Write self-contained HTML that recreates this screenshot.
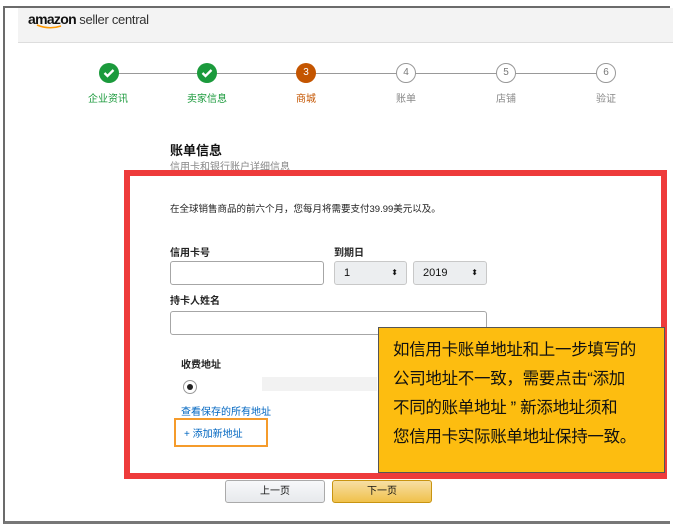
<!DOCTYPE html>
<html><head><meta charset="utf-8"><style>
body{margin:0;width:673px;height:527px;background:#fff;position:relative;overflow:hidden;font-family:"Liberation Sans","Noto Sans CJK SC",sans-serif;}
.a{position:absolute}
.step{position:absolute;top:63px;width:20px;height:20px;border-radius:50%;box-sizing:border-box;text-align:center;font-size:10px;line-height:18px}
.lbl{position:absolute;top:90px;font-size:10px;width:80px;text-align:center;margin-left:-40px}
.inp{position:absolute;border:1px solid #a6a6a6;border-radius:3px;background:#fff;box-sizing:border-box}
.sel{position:absolute;border:1px solid #c8c8c8;border-radius:3px;background:#eceef0;box-sizing:border-box;font-size:11px;line-height:22px;padding-left:9px;color:#111}
.sel span{position:absolute;right:8px;top:0;font-size:8px}
</style></head><body>
<div class="a" style="left:3px;top:6px;width:665px;height:513px;border:2px solid #6b6b6b;border-right:none;border-bottom:3px solid #777"></div>
<div class="a" style="left:18px;top:8px;width:655px;height:34px;background:#f3f3f3;border-bottom:1px solid #ddd"></div>
<div class="a" style="left:28px;top:11px;font-size:14px;color:#111"><b style="letter-spacing:-0.7px">amazon</b><span style="font-size:13px;color:#333;letter-spacing:-0.3px"> seller central</span></div>
<svg class="a" style="left:36px;top:24px" width="28" height="6"><path d="M1 1 Q13 6 25 2" stroke="#f90" stroke-width="1.5" fill="none"/></svg>
<div class="a" style="left:110px;top:73px;width:496px;height:1px;background:#999"></div>
<div class="step" style="left:99px;background:#1b9a3c"><svg width="20" height="20"><path d="M5.5 10l3 3 6-6" stroke="#fff" stroke-width="2.3" fill="none"/></svg></div>
<div class="step" style="left:197px;background:#1b9a3c;top:63px"><svg width="20" height="20" style="margin-left:-1px"><path d="M5.5 10l3 3 6-6" stroke="#fff" stroke-width="2.3" fill="none"/></svg></div>
<div class="step" style="left:296px;background:#c45500;color:#fff;line-height:20px">3</div>
<div class="step" style="left:396px;background:#fff;border:1px solid #999;color:#777">4</div>
<div class="step" style="left:496px;background:#fff;border:1px solid #999;color:#777">5</div>
<div class="step" style="left:596px;background:#fff;border:1px solid #999;color:#777">6</div>
<div class="lbl" style="left:108px;color:#1b9a3c">企业资讯</div>
<div class="lbl" style="left:207px;color:#1b9a3c">卖家信息</div>
<div class="lbl" style="left:306px;color:#c45500">商城</div>
<div class="lbl" style="left:406px;color:#888">账单</div>
<div class="lbl" style="left:506px;color:#888">店铺</div>
<div class="lbl" style="left:606px;color:#888">验证</div>
<div class="a" style="left:170px;top:140px;font-size:13px;font-weight:bold;color:#111">账单信息</div>
<div class="a" style="left:170px;top:158px;font-size:10px;color:#888">信用卡和银行账户详细信息</div>
<div class="a" style="left:124px;top:170px;width:543px;height:309px;border:6px solid #ee3b3b;box-sizing:border-box;background:#fff"></div>
<div class="a" style="left:170px;top:201px;font-size:9.5px;color:#222">在全球销售商品的前六个月，您每月将需要支付39.99美元以及。</div>
<div class="a" style="left:170px;top:244px;font-size:10px;font-weight:bold;color:#222">信用卡号</div>
<div class="a" style="left:334px;top:244px;font-size:10px;font-weight:bold;color:#222">到期日</div>
<div class="inp" style="left:170px;top:261px;width:154px;height:24px"></div>
<div class="sel" style="left:334px;top:261px;width:73px;height:24px">1<span>⬍</span></div>
<div class="sel" style="left:413px;top:261px;width:74px;height:24px">2019<span>⬍</span></div>
<div class="a" style="left:170px;top:292px;font-size:10px;font-weight:bold;color:#222">持卡人姓名</div>
<div class="inp" style="left:170px;top:311px;width:317px;height:24px"></div>
<div class="a" style="left:181px;top:356px;font-size:10px;font-weight:bold;color:#222">收费地址</div>
<div class="a" style="left:183px;top:380px;width:14px;height:14px;border:1px solid #999;border-radius:50%;box-sizing:border-box;background:#fff"></div>
<div class="a" style="left:187px;top:384px;width:6px;height:6px;border-radius:50%;background:#222"></div>
<div class="a" style="left:262px;top:377px;width:115px;height:14px;background:#f2f2f2"></div>
<div class="a" style="left:181px;top:403px;font-size:10px;color:#0066c0">查看保存的所有地址</div>
<div class="a" style="left:174px;top:418px;width:94px;height:29px;border:2px solid #f59b2b;box-sizing:border-box"></div>
<div class="a" style="left:184px;top:425px;font-size:10px;color:#0066c0">+ 添加新地址</div>
<div class="a" style="left:378px;top:327px;width:287px;height:146px;background:#fdbd10;border:1px solid #555;box-sizing:border-box;padding:8px 0 0 14px;font-size:16.5px;line-height:29px;color:#111;white-space:nowrap;letter-spacing:-0.3px">如信用卡账单地址和上一步填写的<br>公司地址不一致，需要点击“添加<br>不同的账单地址 ” 新添地址须和<br>您信用卡实际账单地址保持一致。</div>
<div class="a" style="left:225px;top:480px;width:100px;height:23px;border:1px solid #aaa;border-radius:3px;background:linear-gradient(#f7f8fa,#e7e9ec);box-sizing:border-box;font-size:10px;text-align:center;line-height:21px;color:#111">上一页</div>
<div class="a" style="left:332px;top:480px;width:100px;height:23px;border:1px solid #c89411;border-radius:3px;background:linear-gradient(#f7dfa5,#f0c14b);box-sizing:border-box;font-size:10px;text-align:center;line-height:21px;color:#111">下一页</div>
</body></html>
